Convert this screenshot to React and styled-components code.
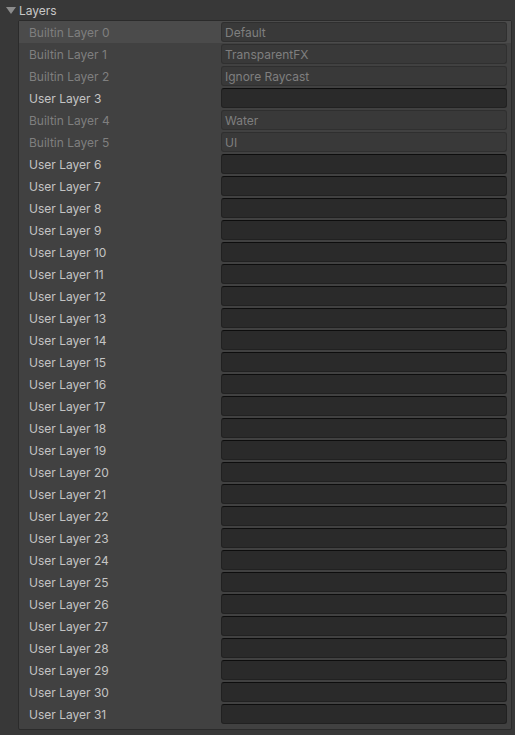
import styled, { createGlobalStyle } from "styled-components";

const GlobalStyle = createGlobalStyle`
  html, body {
    margin: 0;
    padding: 0;
    background: #383838;
  }
  body {
    font-family: Inter, "Noto Sans", sans-serif;
    font-size: 12px;
  }
`;

const Page = styled.div`
  width: 515px;
  height: 735px;
  box-sizing: border-box;
  padding: 0 3px 0 0;
  background: #383838;
  display: flex;
  flex-direction: column;
`;

const Header = styled.div`
  height: 20px;
  display: flex;
  align-items: center;
  gap: 2px;
  padding-left: 6px;
  color: #c8c8c8;
  font-size: 12px;
`;

const Arrow = styled.span`
  width: 0;
  height: 0;
  border-left: 5px solid transparent;
  border-right: 5px solid transparent;
  border-top: 7px solid #8c8c8c;
  margin-top: 1px;
  margin-right: 1px;
`;

const Panel = styled.div`
  margin-left: 18px;
  width: 494px;
  box-sizing: border-box;
  background: #414141;
  border: 1px solid #2b2b2b;
  border-radius: 2px;
  padding: 0 0 4px;
  display: flex;
  flex-direction: column;
`;

const Row = styled.div`
  height: 22px;
  display: grid;
  grid-template-columns: 192px 1fr;
  align-items: center;
  padding: 0 4px 0 10px;
  background: ${({ $selected }) => ($selected ? "#4b4b4b" : "transparent")};
`;

const Label = styled.span`
  color: ${({ $builtin }) => ($builtin ? "#7f7f7f" : "#c4c4c4")};
  font-size: 12px;
  white-space: nowrap;
`;

const Field = styled.div`
  height: 20px;
  box-sizing: border-box;
  border-radius: 3px;
  padding: 0 3px;
  display: flex;
  align-items: center;
  font-size: 12px;
  color: #7f7f7f;
  background: ${({ $builtin }) => ($builtin ? "#393939" : "#2a2a2a")};
  border: 1px solid ${({ $builtin }) => ($builtin ? "#303030" : "#212121")};
  border-top-color: ${({ $builtin }) => ($builtin ? "#2f2f2f" : "#0d0d0d")};
`;

const builtins = {
  0: "Default",
  1: "TransparentFX",
  2: "Ignore Raycast",
  4: "Water",
  5: "UI",
};

const layers = Array.from({ length: 32 }, (_, i) => {
  const builtin = i in builtins;
  return {
    index: i,
    builtin,
    label: `${builtin ? "Builtin" : "User"} Layer ${i}`,
    value: builtin ? builtins[i] : "",
  };
});

export default function App() {
  return (
    <>
      <GlobalStyle />
      <Page>
        <Header>
          <Arrow />
          Layers
        </Header>
        <Panel>
          {layers.map((layer) => (
            <Row key={layer.index} $selected={layer.index === 0}>
              <Label $builtin={layer.builtin}>{layer.label}</Label>
              <Field $builtin={layer.builtin}>{layer.value}</Field>
            </Row>
          ))}
        </Panel>
      </Page>
    </>
  );
}
